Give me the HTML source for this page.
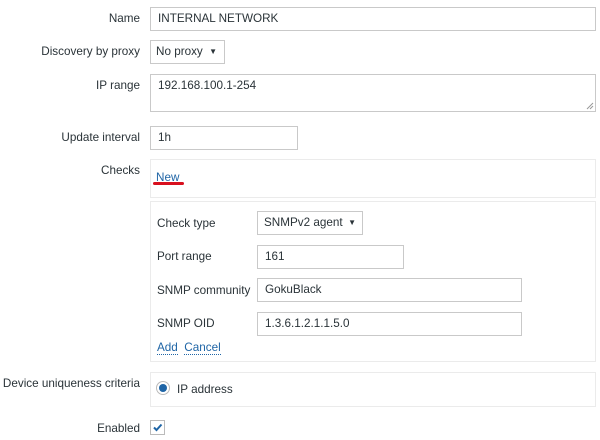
<!DOCTYPE html>
<html><head><meta charset="utf-8"><style>
body{margin:0;width:600px;height:440px;background:#fff;font-family:"Liberation Sans",Arial,sans-serif;font-size:11.7px;color:#2a3338;position:relative;overflow:hidden}
.a{position:absolute}
.lbl{position:absolute;right:460px;text-align:right;white-space:nowrap}
.in{position:absolute;border:1px solid #c9c9c9;background:#fff;box-sizing:border-box;padding-left:7px;line-height:22px;white-space:nowrap}
.box{position:absolute;border:1px solid #ebebeb;box-sizing:border-box}
.lnk{color:#1f65a6;border-bottom:1px dotted #1f65a6}
.tri{font-size:8px;position:absolute;right:7px;top:0}
</style></head><body>
<div class="lbl" style="top:12px">Name</div>
<div class="in" style="left:150px;top:7px;width:446px;height:24px">INTERNAL NETWORK</div>
<div class="lbl" style="top:45px">Discovery by proxy</div>
<div class="in" style="left:150px;top:40px;width:75px;height:24px;padding-left:5px">No proxy<span class="tri">▼</span></div>
<div class="lbl" style="top:79px">IP range</div>
<div class="in" style="left:150px;top:74px;width:446px;height:38px">192.168.100.1-254
<svg class="a" style="right:1px;bottom:1px" width="8" height="8"><path d="M1 7L7 1M4 7L7 4" stroke="#999" stroke-width="1"/></svg></div>
<div class="lbl" style="top:131px">Update interval</div>
<div class="in" style="left:150px;top:126px;width:148px;height:24px">1h</div>
<div class="lbl" style="top:164px">Checks</div>
<div class="box" style="left:150px;top:159px;width:446px;height:39px"></div>
<div class="a" style="left:156px;top:171px;color:#1f65a6">New</div>
<div class="a" style="left:153px;top:182px;width:31px;height:3px;background:#d8101e;border-radius:2px"></div>
<div class="box" style="left:150px;top:201px;width:446px;height:161px"></div>
<div class="a" style="left:157px;top:217px">Check type</div>
<div class="in" style="left:257px;top:211px;width:106px;height:24px;padding-left:6px">SNMPv2 agent<span class="tri" style="right:6px">▼</span></div>
<div class="a" style="left:157px;top:250px">Port range</div>
<div class="in" style="left:257px;top:245px;width:147px;height:24px">161</div>
<div class="a" style="left:157px;top:284px">SNMP community</div>
<div class="in" style="left:257px;top:278px;width:265px;height:24px">GokuBlack</div>
<div class="a" style="left:157px;top:317px">SNMP OID</div>
<div class="in" style="left:257px;top:312px;width:265px;height:24px">1.3.6.1.2.1.1.5.0</div>
<div class="a" style="left:157px;top:341px"><span class="lnk">Add</span>&nbsp; <span class="lnk">Cancel</span></div>
<div class="lbl" style="top:377px">Device uniqueness criteria</div>
<div class="box" style="left:150px;top:372px;width:446px;height:35px"></div>
<div class="a" style="left:156px;top:381px;width:14px;height:14px;border:1px solid #bbb;border-radius:50%;box-sizing:border-box"></div>
<div class="a" style="left:159px;top:384px;width:8px;height:8px;border-radius:50%;background:#1f65a6"></div>
<div class="a" style="left:177px;top:383px">IP address</div>
<div class="lbl" style="top:422px">Enabled</div>
<div class="a" style="left:150px;top:420px;width:15px;height:15px;border:1px solid #bbb;box-sizing:border-box"></div>
<svg class="a" style="left:152px;top:422px" width="11" height="11"><path d="M2 5.5L4.5 8L9.5 2.5" stroke="#1f65a6" stroke-width="2" fill="none"/></svg>
</body></html>
